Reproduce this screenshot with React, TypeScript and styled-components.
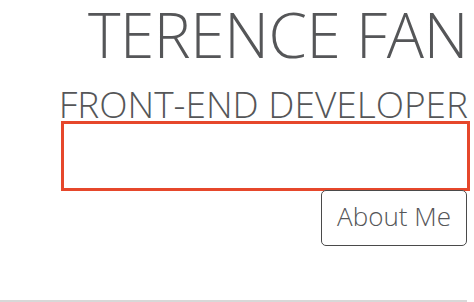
import React from "react";
import styled, { createGlobalStyle } from "styled-components";

const GlobalStyle = createGlobalStyle`
  html, body {
    margin: 0;
    padding: 0;
    background: #fff;
  }
  body {
    width: 474px;
    height: 302px;
    overflow: hidden;
    font-family: "Open Sans", "Liberation Sans", sans-serif;
  }
`;

const Page = styled.div`
  height: 302px;
  display: flex;
  flex-direction: column;
`;

const Header = styled.header`
  flex: 1;
  display: flex;
  flex-direction: column;
  align-items: flex-end;
  padding: 3px 4px 0 0;
  color: #555658;
`;

const Title = styled.h1`
  margin: 0;
  font-size: 62px;
  font-weight: 300;
  line-height: 1;
  letter-spacing: -0.4px;
  padding-right: 2px;
  white-space: nowrap;
`;

const Subtitle = styled.h2`
  margin: 20px 0 0;
  font-size: 37px;
  font-weight: 300;
  line-height: 1;
  padding-right: 2px;
  white-space: nowrap;
`;

const Frame = styled.div`
  box-sizing: border-box;
  width: 409px;
  height: 70px;
  margin-top: -1px;
  border: 3px solid #e6472b;
`;

const Button = styled.button`
  box-sizing: border-box;
  width: 146px;
  height: 56px;
  margin: -1px 3px 0 0;
  border: 1.5px solid #4a4a4a;
  border-radius: 5px;
  background: #fff;
  color: #555658;
  font-family: "Open Sans", "Liberation Sans", sans-serif;
  font-size: 26px;
  font-weight: 300;
  padding: 0 0 4px;
`;

const Rule = styled.div`
  width: 467px;
  height: 2px;
  background: #d8d8d8;
`;

export default function App() {
  return (
    <>
      <GlobalStyle />
      <Page>
        <Header>
          <Title>TERENCE FAN</Title>
          <Subtitle>FRONT-END DEVELOPER</Subtitle>
          <Frame />
          <Button>About Me</Button>
        </Header>
        <Rule />
      </Page>
    </>
  );
}
